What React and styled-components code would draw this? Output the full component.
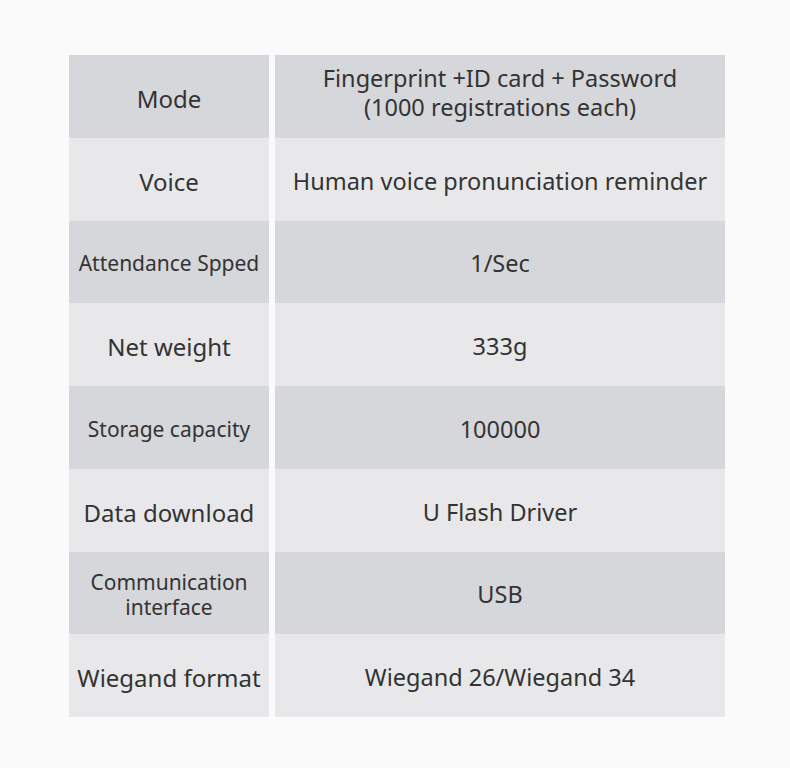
import React from 'react'
import styled, { createGlobalStyle } from 'styled-components'

const GlobalStyle = createGlobalStyle`
  html, body {
    margin: 0;
    padding: 0;
    background: #fafafa;
  }
  body {
    font-family: "Noto Sans", "Open Sans", sans-serif;
    color: #333333;
  }
`;

const specs = [
  { label: 'Mode', lift: true, value: ['Fingerprint +ID card + Password', '(1000 registrations each)'] },
  { label: 'Voice', value: ['Human voice pronunciation reminder'] },
  { label: 'Attendance Spped', small: true, value: ['1/Sec'] },
  { label: 'Net weight', value: ['333g'] },
  { label: 'Storage capacity', small: true, value: ['100000'] },
  { label: 'Data download', value: ['U Flash Driver'] },
  { label: 'Communication interface', small: true, wrap: true, value: ['USB'] },
  { label: 'Wiegand format', value: ['Wiegand 26/Wiegand 34'] },
];

export default function App() {
  return (
    <>
      <GlobalStyle />
      <Page>
        <Table>
          {specs.map((row, i) => (
            <Row key={row.label} $dark={i % 2 === 0}>
              <LabelCell $small={row.small}>
                {row.wrap ? <>Communication<br />interface</> : row.label}
              </LabelCell>
              <ValueCell $lift={row.lift}>
                {row.value.map((line) => (
                  <span key={line}>{line}</span>
                ))}
              </ValueCell>
            </Row>
          ))}
        </Table>
      </Page>
    </>
  )
}

const Page = styled.div`
  width: 790px;
  height: 768px;
  padding: 55px 0 0 69px;
  box-sizing: border-box;
`;

const Table = styled.div`
  width: 656px;
  height: 662px;
  display: grid;
  grid-template-rows: repeat(8, 1fr);
`;

const Row = styled.div`
  display: grid;
  grid-template-columns: 200px 450px;
  column-gap: 6px;
  --cell-bg: ${(p) => (p.$dark ? '#d6d7da' : '#e8e8ea')};
`;

const Cell = styled.div`
  background: var(--cell-bg);
  display: flex;
  flex-direction: column;
  align-items: center;
  justify-content: center;
  text-align: center;
  box-sizing: border-box;
  padding-top: 4px;
`;

const LabelCell = styled(Cell)`
  font-size: ${(p) => (p.$small ? '21px' : '24px')};
  line-height: ${(p) => (p.$small ? '25px' : '29px')};
`;

const ValueCell = styled(Cell)`
  font-size: 23.5px;
  line-height: 29px;
  padding-top: ${(p) => (p.$lift ? '0' : '4px')};
  padding-bottom: ${(p) => (p.$lift ? '6px' : '0')};
`;
